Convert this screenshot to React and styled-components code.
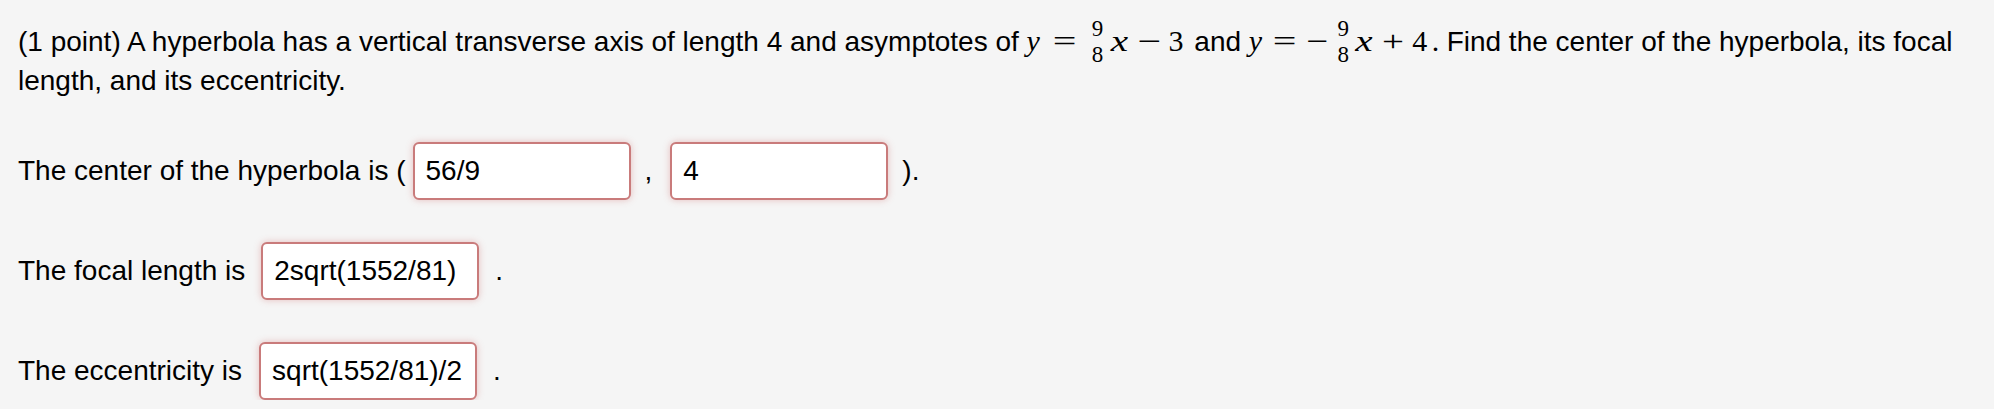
import React from "react";
import styled, { createGlobalStyle } from "styled-components";

const GlobalStyle = createGlobalStyle`
  html, body {
    margin: 0;
    background: #f5f5f5;
  }
`;

const Page = styled.div`
  padding: 21px 0 0 18px;
  font-family: "Liberation Sans", Arial, Helvetica, sans-serif;
  font-size: 28px;
  color: #000;
`;

const Problem = styled.p`
  margin: 0;
  line-height: 39px;
`;

const Eq = styled.span`
  margin-right: ${(p) => p.$mr || 0}px;
`;

const Atom = styled.span`
  display: inline-block;
  width: ${(p) => p.$w}px;
  margin-left: ${(p) => p.$ml || 0}px;
  text-align: center;
  font-family: "Liberation Serif", "Times New Roman", serif;
  font-size: 30px;
  font-style: ${(p) => (p.$it ? "italic" : "normal")};
  transform: scaleX(${(p) => p.$sx || 1});
`;

const Frac = styled.span`
  display: inline-flex;
  flex-direction: column;
  align-items: center;
  width: ${(p) => p.$w}px;
  margin: -7px 0 -7px ${(p) => p.$ml || 0}px;
  vertical-align: 15px;
  gap: 4px;
  font-family: "Liberation Serif", "Times New Roman", serif;
  font-size: 23px;
  line-height: 22px;
`;

const Row = styled.div`
  display: flex;
  align-items: baseline;
  margin-top: 42px;
  line-height: 39px;
  white-space: pre;
`;

const Answer = styled.input`
  box-sizing: border-box;
  width: 218px;
  height: 58px;
  margin: 0 ${(p) => p.$mr || 0}px 0 ${(p) => p.$ml || 0}px;
  padding: 0 11px;
  border: 2px solid #c97b7b;
  border-radius: 6px;
  background: #fff;
  box-shadow: 0 0 7px rgba(200, 90, 90, 0.35);
  font-family: "Liberation Sans", Arial, Helvetica, sans-serif;
  font-size: 28px;
  color: #000;
  outline: none;
`;

function Fraction({ num, den, w, ml }) {
  return (
    <Frac $w={w} $ml={ml}>
      <span>{num}</span>
      <span>{den}</span>
    </Frac>
  );
}

export default function App() {
  return (
    <>
      <GlobalStyle />
      <Page>
        <Problem>
          (1 point) A hyperbola has a vertical transverse axis of length 4 and
          asymptotes of{" "}
          <Eq $mr={5}>
            <Atom $w={12} $it>y</Atom>
            <Atom $w={21} $ml={15} $sx={1.4}>=</Atom>
            <Fraction num="9" den="8" w={12} ml={17} />
            <Atom $w={19} $ml={6} $it $sx={1.3}>x</Atom>
            <Atom $w={21} $ml={10} $sx={1.4}>−</Atom>
            <Atom $w={13} $ml={9}>3</Atom>
          </Eq>{" "}
          and{" "}
          <Eq $mr={2}>
            <Atom $w={12} $it>y</Atom>
            <Atom $w={21} $ml={13} $sx={1.4}>=</Atom>
            <Atom $w={19} $ml={13} $sx={1.3}>−</Atom>
            <Fraction num="9" den="8" w={13} ml={10} />
            <Atom $w={18} $ml={5} $it $sx={1.3}>x</Atom>
            <Atom $w={20} $ml={10} $sx={1.3}>+</Atom>
            <Atom $w={16} $ml={9}>4</Atom>
            <Atom $w={5} $ml={4}>.</Atom>
          </Eq>{" "}
          Find the center of the hyperbola, its focal length, and its
          eccentricity.
        </Problem>

        <Row>
          <span>The center of the hyperbola is (</span>
          <Answer readOnly value="56/9" $ml={7} $mr={14} />
          <span>,</span>
          <Answer readOnly value="4" $ml={18} $mr={14} />
          <span>).</span>
        </Row>

        <Row>
          <span>The focal length is</span>
          <Answer readOnly value="2sqrt(1552/81)" $ml={16} $mr={16} />
          <span>.</span>
        </Row>

        <Row>
          <span>The eccentricity is</span>
          <Answer readOnly value="sqrt(1552/81)/2" $ml={17} $mr={16} />
          <span>.</span>
        </Row>
      </Page>
    </>
  );
}
